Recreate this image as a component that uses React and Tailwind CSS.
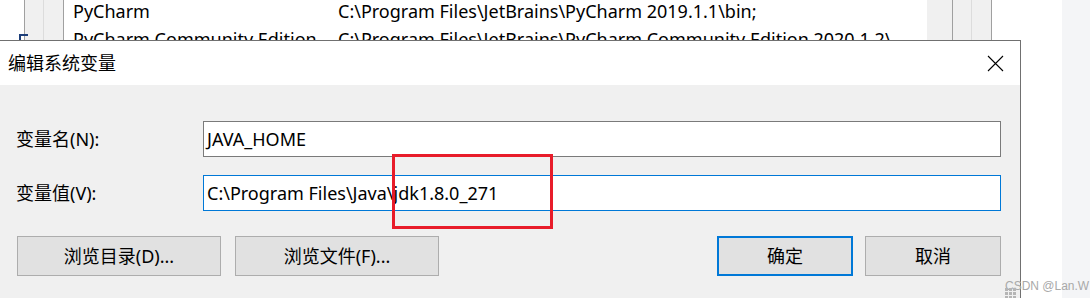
import React from "react";

const FONT = { fontFamily: '"Noto Sans", "Noto Sans CJK SC", sans-serif' };

const Row = ({ name, value }) => (
    <div className="flex items-center h-[28px] text-[18px] text-black whitespace-nowrap">
        <span className="w-[274px] pl-[9px]">{name}</span>
        <span>{value}</span>
    </div>
);

const Btn = ({ children, primary, className = "" }) => (
    <button
        className={
            "h-[40px] bg-[#e1e1e1] text-[18px] text-black flex items-center justify-center " +
            (primary ? "border-2 border-[#0078d7] " : "border border-[#adadad] ") +
            className
        }
    >
        {children}
    </button>
);

export default function App() {
    return (
        <div className="relative w-[1090px] h-[298px] overflow-hidden bg-white" style={FONT}>
            {/* window behind */}
            <div className="flex h-full">
                <div className="w-[25px] border-r border-[#a0a0a0] bg-white relative">
                    <div className="absolute left-[19px] top-[34px] w-[9px] h-[6px] border-l-2 border-t-2 border-[#1d3f7a]" />
                </div>
                <div className="w-[19px] bg-[#f0f0f0] border-r border-[#dcdcdc]" />
                <div className="w-[20px] bg-[#f0f0f0] border-r border-[#a0a0a0]" />
                <div className="w-[863px] bg-white -mt-[3px]">
                    <Row name="PyCharm" value="C:\Program Files\JetBrains\PyCharm 2019.1.1\bin;" />
                    <Row name="PyCharm Community Edition" value="C:\Program Files\JetBrains\PyCharm Community Edition 2020.1.2\" />
                </div>
                <div className="w-[26px] bg-[#f0f0f0] border-r border-[#a0a0a0]" />
                <div className="w-[19px] bg-[#f0f0f0] border-r border-[#dcdcdc]" />
                <div className="w-[20px] bg-[#f0f0f0] border-r border-[#a0a0a0]" />
                <div className="w-[70px] bg-white" />
                <div className="flex-1 bg-[#f4f5f7]" />
            </div>

            {/* dialog */}
            <div className="absolute left-0 top-[40px] w-[1021px] h-[258px] flex flex-col border-t border-r border-[#707070] bg-[#f0f0f0]">
                <div className="h-[44px] bg-white flex items-center justify-between pl-[8px] pr-[16px]">
                    <span className="text-[18px] text-black">编辑系统变量</span>
                    <svg width="17" height="17" viewBox="0 0 17 17">
                        <path d="M1 1L16 16M16 1L1 16" stroke="#000" strokeWidth="1.1" />
                    </svg>
                </div>
                <div className="flex flex-col pt-[36px] pl-[16px] pr-[19px]">
                    <div className="flex items-center h-[36px]">
                        <span className="w-[187px] text-[18px] text-black">变量名(N):</span>
                        <div className="flex-1 h-full bg-white border border-[#7a7a7a] flex items-center pl-[3px] text-[18px] text-black">
                            JAVA_HOME
                        </div>
                    </div>
                    <div className="flex items-center h-[36px] mt-[18px]">
                        <span className="w-[187px] text-[18px] text-black">变量值(V):</span>
                        <div className="flex-1 h-full bg-white border border-[#0078d7] flex items-center pl-[3px] text-[18px] text-black whitespace-nowrap">
                            C:\Program Files\Java\jdk1.8.0_271
                        </div>
                    </div>
                    <div className="flex mt-[25px] pl-[1px]">
                        <Btn className="w-[204px]">浏览目录(D)...</Btn>
                        <Btn className="w-[204px] ml-[14px]">浏览文件(F)...</Btn>
                        <Btn primary className="w-[136px] ml-auto">确定</Btn>
                        <Btn className="w-[136px] ml-[12px]">取消</Btn>
                    </div>
                </div>
            </div>

            {/* red highlight */}
            <div className="absolute left-[392px] top-[154px] w-[161px] h-[75px] border-[3px] border-[#e81c2a]" />

            {/* watermark */}
            <div className="absolute left-[1005px] top-[277px] text-[12px] text-[#a9a9a9]" style={{ fontFamily: '"Liberation Sans", sans-serif' }}>
                CSDN @Lan.W
            </div>
            <div className="absolute left-[1005px] top-[288px] grid grid-cols-3 gap-[1px]">
                {Array.from({ length: 9 }).map((_, i) => (
                    <div key={i} className="w-[3px] h-[3px] bg-[#b5b5b5]" />
                ))}
            </div>
        </div>
    );
}
